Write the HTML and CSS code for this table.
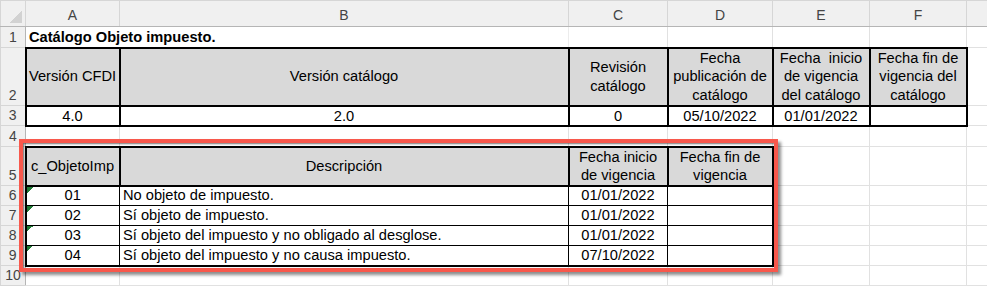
FILE: index.html
```html
<!DOCTYPE html>
<html lang="es">
<head>
	<meta charset="UTF-8">
	<title>Catálogo Objeto impuesto</title>
	<link rel="stylesheet" href="styles.css">
</head>
<body>
	<div class="sheet">
		<table class="grid">
			<colgroup>
				<col class="col-num">
				<col class="col-a">
				<col class="col-b">
				<col class="col-c">
				<col class="col-d">
				<col class="col-e">
				<col class="col-f">
				<col class="col-g">
			</colgroup>
			<thead>
				<tr class="row-letters">
					<th class="corner"></th>
					<th>A</th>
					<th>B</th>
					<th>C</th>
					<th>D</th>
					<th>E</th>
					<th>F</th>
					<th></th>
				</tr>
			</thead>
			<tbody>
				<tr class="h21">
					<th>1</th>
					<td colspan="2" class="title">Catálogo Objeto impuesto.</td>
					<td></td><td></td><td></td><td></td><td></td>
				</tr>
				<tr class="h58">
					<th>2</th>
					<td class="hd">Versión CFDI</td>
					<td class="hd">Versión catálogo</td>
					<td class="hd">Revisión<br>catálogo</td>
					<td class="hd">Fecha<br>publicación de<br>catálogo</td>
					<td class="hd">Fecha&nbsp; inicio<br>de vigencia<br>del catálogo</td>
					<td class="hd">Fecha fin de<br>vigencia del<br>catálogo</td>
					<td></td>
				</tr>
				<tr class="h20">
					<th>3</th>
					<td class="box">4.0</td>
					<td class="box">2.0</td>
					<td class="box">0</td>
					<td class="box">05/10/2022</td>
					<td class="box">01/01/2022</td>
					<td class="box"></td>
					<td></td>
				</tr>
				<tr class="h21">
					<th>4</th>
					<td></td><td></td><td></td><td></td><td></td><td></td><td></td>
				</tr>
				<tr class="h39">
					<th>5</th>
					<td class="hd">c_ObjetoImp</td>
					<td class="hd">Descripción</td>
					<td class="hd">Fecha inicio<br>de vigencia</td>
					<td class="hd">Fecha fin de<br>vigencia</td>
					<td></td><td></td><td></td>
				</tr>
				<tr class="h20">
					<th>6</th>
					<td class="cell edge-l txt">01</td>
					<td class="cell left">No objeto de impuesto.</td>
					<td class="cell">01/01/2022</td>
					<td class="cell edge-r"></td>
					<td></td><td></td><td></td>
				</tr>
				<tr class="h20">
					<th>7</th>
					<td class="cell edge-l txt">02</td>
					<td class="cell left">Sí objeto de impuesto.</td>
					<td class="cell">01/01/2022</td>
					<td class="cell edge-r"></td>
					<td></td><td></td><td></td>
				</tr>
				<tr class="h20">
					<th>8</th>
					<td class="cell edge-l txt">03</td>
					<td class="cell left">Sí objeto del impuesto y no obligado al desglose.</td>
					<td class="cell">01/01/2022</td>
					<td class="cell edge-r"></td>
					<td></td><td></td><td></td>
				</tr>
				<tr class="h20">
					<th>9</th>
					<td class="cell edge-l edge-b txt">04</td>
					<td class="cell edge-b left">Sí objeto del impuesto y no causa impuesto.</td>
					<td class="cell edge-b">07/10/2022</td>
					<td class="cell edge-r edge-b"></td>
					<td></td><td></td><td></td>
				</tr>
				<tr class="h20">
					<th>10</th>
					<td></td><td></td><td></td><td></td><td></td><td></td><td></td>
				</tr>
			</tbody>
		</table>
		<!-- marco rojo sobre la segunda tabla -->
		<div class="callout"></div>
	</div>
</body>
</html>
```

FILE: styles.css
```css
* {
	margin: 0;
	padding: 0;
	box-sizing: border-box;
}
body {
	background: #fff;
	overflow: hidden;
	font-family: "Liberation Sans", Arial, sans-serif;
	font-size: 14.67px;
	color: #000;
}
.sheet {
	position: relative;
	width: 987px;
	height: 287px;
	overflow: hidden;
}
.grid {
	border-collapse: collapse;
	table-layout: fixed;
	width: 1030px;
}
.col-num { width: 25px; }
.col-a { width: 94px; }
.col-b { width: 449px; }
.col-c { width: 99px; }
.col-d { width: 105px; }
.col-e { width: 97px; }
.col-f { width: 97px; }
.col-g { width: 64px; }

/* cabeceras de fila y columna */
.grid th {
	background: #f0f0f0;
	color: #444;
	font-weight: normal;
	font-size: 14px;
	border: 1px solid #d6d6d6;
}
.row-letters {
	height: 26px;
}
.row-letters th {
	border-bottom: 1px solid #b5b5b5;
	text-align: center;
	vertical-align: middle;
	padding-top: 2px;
}
.grid tbody th {
	border-right: 1px solid #b5b5b5;
	text-align: center;
	vertical-align: bottom;
	padding-bottom: 1px;
	line-height: 17px;
}
.grid th.corner {
	position: relative;
}
.corner::after {
	content: "";
	position: absolute;
	right: 3px;
	bottom: 3px;
	width: 12px;
	height: 12px;
	background: linear-gradient(135deg, transparent 50%, #d2d2d2 50%);
}

/* celdas */
.grid td {
	border: 1px solid #e1e1e1;
	text-align: center;
	vertical-align: middle;
	white-space: nowrap;
	line-height: 18px;
	padding: 0 2px;
	overflow: visible;
}
.h20 { height: 20px; }
.h21 { height: 21px; }
.h39 { height: 39px; }
.h58 { height: 58px; }

.grid td.title {
	font-weight: bold;
	text-align: left;
	border-right: 1px solid #ececec;
	padding-left: 3px;
	padding-top: 1px;
}
.grid td.hd {
	background: #d9d9d9;
	border: 2px solid #000;
	line-height: 18.5px;
}
.grid td.box {
	border: 2px solid #000;
}
.grid td.cell {
	border: 1px solid #000;
	line-height: 17px;
}
.grid td.left {
	text-align: left;
	padding-left: 3px;
}
.grid td.edge-l { border-left: 2px solid #000; }
.grid td.edge-r { border-right: 2px solid #000; }
.grid td.edge-b { border-bottom: 2px solid #000; }

/* número guardado como texto */
.grid td.txt {
	position: relative;
}
.txt::before {
	content: "";
	position: absolute;
	left: 0;
	top: 0;
	width: 6px;
	height: 6px;
	background: linear-gradient(135deg, #1f7a35 50%, transparent 50%);
}

.callout {
	position: absolute;
	left: 19px;
	top: 139px;
	width: 759px;
	height: 133px;
	border: 4px solid #f8584c;
	box-shadow: 3px 3px 3px rgba(0, 0, 0, 0.45), inset 1px 1px 2px rgba(0, 0, 0, 0.55);
	pointer-events: none;
}
```
